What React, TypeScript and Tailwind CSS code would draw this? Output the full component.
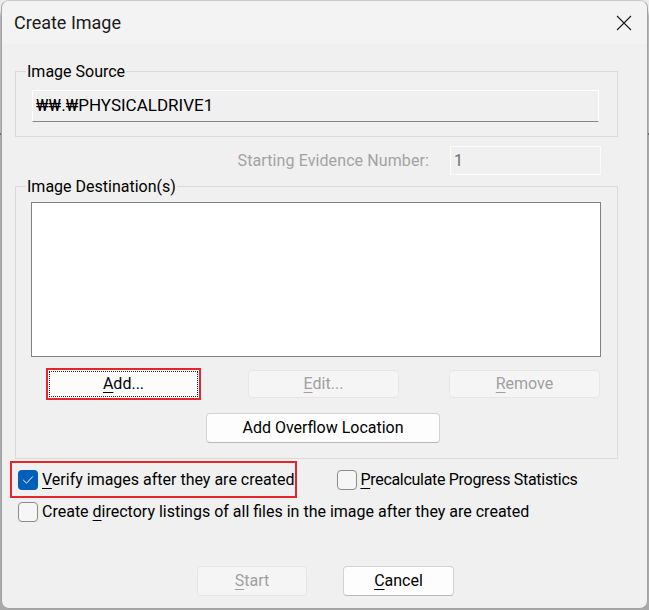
import React from "react";

function Group({ label, className, children }: { label: string; className?: string; children: React.ReactNode }) {
  return (
    <div className={`relative border border-[#dadada] ${className ?? ""}`}>
      <span className="absolute left-[10px] top-[-10px] bg-[#f0f0f0] px-[1px] text-[16px] leading-[20px] text-black">
        {label}
      </span>
      {children}
    </div>
  );
}

function Mn({ children }: { children: React.ReactNode }) {
  return <span className="underline decoration-1 underline-offset-[3px]">{children}</span>;
}

function Button({ children, disabled, className }: { children: React.ReactNode; disabled?: boolean; className?: string }) {
  return (
    <div
      className={`flex items-center justify-center rounded-[4px] border text-[16px] ${
        disabled
          ? "border-[#e6e6e6] bg-[#f5f5f5] text-[#a0a0a0]"
          : "border-[#d2d2d2] border-b-[#b9b9b9] bg-[#fdfdfd] text-black"
      } ${className ?? ""}`}
    >
      {children}
    </div>
  );
}

function Checkbox({ checked }: { checked?: boolean }) {
  if (checked) {
    return (
      <div className="flex h-[20px] w-[20px] shrink-0 items-center justify-center rounded-[4px] bg-[#005fb8]">
        <svg width="12" height="10" viewBox="0 0 12 10" fill="none">
          <path d="M1.5 5.2l3 3 6-6.4" stroke="white" strokeWidth="1" strokeLinecap="round" strokeLinejoin="round" />
        </svg>
      </div>
    );
  }
  return <div className="h-[20px] w-[20px] shrink-0 rounded-[4px] border border-[#8b8b8b] bg-[#f6f6f6]" />;
}

export default function App() {
  return (
    <div className="h-[610px] w-[649px] bg-[linear-gradient(to_bottom,#ececec_0px,#ececec_10px,#b6b6b6_16px,#b6b6b6_133px,#6e6e6e_133px,#6e6e6e_135px,#a9a9a9_135px)] px-[1px] pb-[1px] font-[Roboto,'Noto_Sans',sans-serif]">
      <div className="flex h-full flex-col overflow-hidden rounded-[8px] border border-[#a3a3a3] border-t-[#c8c8c8] bg-[#f0f0f0]">
        {/* Title bar */}
        <div className="flex h-[43px] shrink-0 items-center justify-between bg-[#f3f3f3] pl-[12px] pr-[15px]">
          <span className="text-[18px] leading-[24px] text-[#1a1a1a]">Create Image</span>
          <svg width="16" height="16" viewBox="0 0 16 16" fill="none">
            <path d="M1 1l14 14M15 1L1 15" stroke="#1a1a1a" strokeWidth="1.1" />
          </svg>
        </div>

        <div className="flex flex-col pl-[13px]">
          {/* Image Source */}
          <Group label="Image Source" className="mt-[27px] w-[603px] pb-[14px] pl-[16px] pt-[18px]">
            <div className="flex h-[32px] w-[567px] items-center border border-white border-b-[#868686] bg-[#f0f0f0] pl-[3px] text-[17px] text-black">
              ₩₩.₩PHYSICALDRIVE1
            </div>
          </Group>

          {/* Starting evidence number */}
          <div className="mt-[9px] flex w-[603px] items-center justify-end gap-[21px] pr-[17px]">
            <span className="text-[16px] tracking-[0.1px] text-[#a3a3a3]">Starting Evidence Number:</span>
            <div className="flex h-[29px] w-[151px] items-center border border-[#fbfbfb] bg-[#f0f0f0] pl-[3px] text-[16px] text-[#6d6d6d]">
              1
            </div>
          </div>

          {/* Image Destination(s) */}
          <Group label="Image Destination(s)" className="mt-[11px] w-[603px] pb-[15px] pl-[15px] pt-[15px]">
            <div className="h-[155px] w-[570px] border border-[#828282] bg-white" />
            <div className="mt-[11px] flex items-center">
              <div className="ml-[15px] border-2 border-[#e3262b]">
                <div className="h-[28px] w-[151px] bg-[#fdfdfd] p-[1px]">
                  <div className="flex h-full w-full items-center justify-center border border-dotted border-[#202020] text-[16px] text-black">
                    <span>
                      <Mn>A</Mn>dd...
                    </span>
                  </div>
                </div>
              </div>
              <Button disabled className="ml-[47px] h-[28px] w-[151px]">
                <span>
                  <Mn>E</Mn>dit...
                </span>
              </Button>
              <Button disabled className="ml-[50px] h-[28px] w-[151px]">
                <span>
                  <Mn>R</Mn>emove
                </span>
              </Button>
            </div>
            <Button className="ml-[175px] mt-[13px] h-[30px] w-[234px]">Add Overflow Location</Button>
          </Group>

          {/* Options */}
          <div className="mt-[2px] flex items-center">
            <div className="-ml-[5px] flex h-[37px] items-center gap-[4px] border-2 border-[#e3262b] pl-[6px] pr-[1px]">
              <Checkbox checked />
              <span className="text-[16px] text-black">
                <Mn>V</Mn>erify images after they are created
              </span>
            </div>
            <div className="ml-[40px] flex items-center gap-[3px]">
              <Checkbox />
              <span className="text-[16px] tracking-[-0.3px] text-black">
                <Mn>P</Mn>recalculate Progress Statistics
              </span>
            </div>
          </div>
          <div className="ml-[3px] mt-[2px] flex items-center gap-[4px]">
            <Checkbox />
            <span className="text-[16px] text-black">
              Create <Mn>d</Mn>irectory listings of all files in the image after they are created
            </span>
          </div>

          {/* Bottom buttons */}
          <div className="mt-[42px] flex justify-center gap-[36px] pr-[11px]">
            <Button disabled className="h-[30px] w-[110px]">
              <span>
                <Mn>S</Mn>tart
              </span>
            </Button>
            <Button className="h-[30px] w-[111px]">
              <span>
                <Mn>C</Mn>ancel
              </span>
            </Button>
          </div>
        </div>
      </div>
    </div>
  );
}
